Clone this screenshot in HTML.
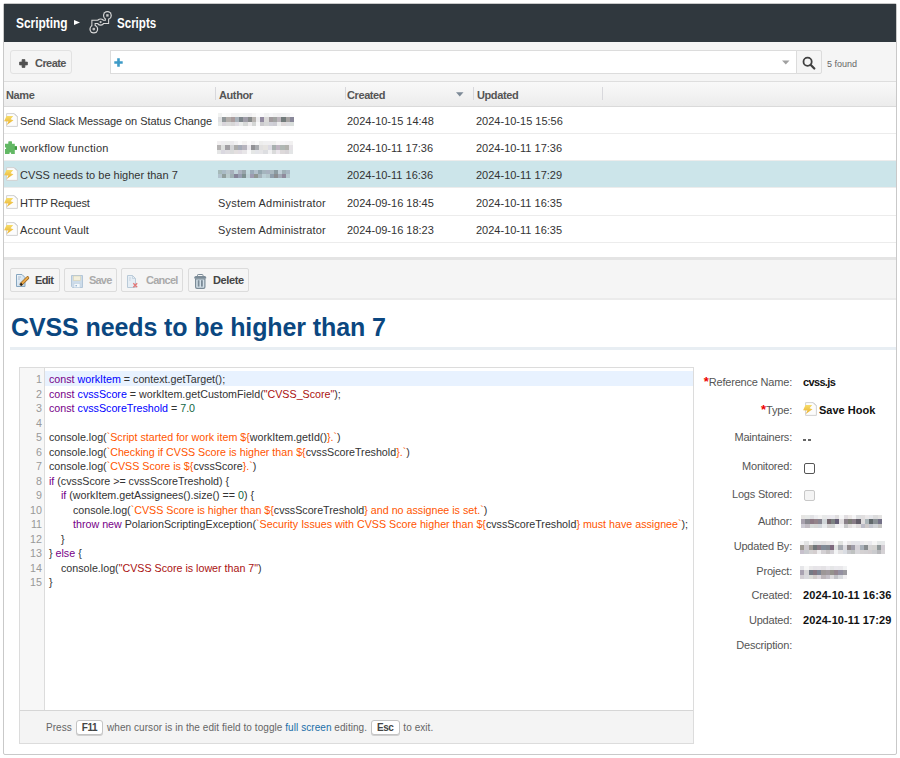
<!DOCTYPE html>
<html><head><meta charset="utf-8"><style>
*{box-sizing:border-box}
html,body{margin:0;padding:0;background:#fff;width:900px;height:758px;overflow:hidden;font-family:"Liberation Sans",sans-serif;color:#333}
.a{position:absolute;white-space:nowrap}
#frame{position:absolute;left:3px;top:3px;width:894px;height:752px;border:1px solid #c9c9c9;border-radius:2px}
#hdr{position:absolute;left:4px;top:4px;width:892px;height:38px;background:#30383e}
#tb{position:absolute;left:4px;top:42px;width:892px;height:40px;background:#f5f5f5;border-bottom:1px solid #dedede}
.btn{position:absolute;border:1px solid #dcdcdc;border-radius:2px;background:#f5f5f5;height:24px;top:0}
#thead{position:absolute;left:4px;top:82px;width:892px;height:25px;background:linear-gradient(#f9f9f9,#ececec);border-bottom:1px solid #dadada}
#thead .a{font-size:11px;font-weight:bold;color:#555;top:7px;line-height:12px;letter-spacing:-0.4px}
.row{position:absolute;left:4px;width:892px;height:27px;border-bottom:1px solid #ececec;font-size:11px;color:#333}
.row .a{top:8px;line-height:12px}
.sel{background:#cce5ea}
.sep{position:absolute;top:5px;width:1px;height:13px;background:#d8d8dc}
#tb2{position:absolute;left:4px;top:257px;width:892px;height:43px;background:#f5f5f5;border-top:3px solid #e4e4e4;border-bottom:2px solid #ebebeb}
#tb2 .btn{top:8px}
#tb2 .bt{position:absolute;top:5px;font-size:11px;font-weight:bold;line-height:12px}
h1{position:absolute;margin:0;left:11px;top:315px;font-size:25px;line-height:25px;font-weight:bold;color:#0b4780;white-space:nowrap;letter-spacing:-0.1px}
#uline{position:absolute;left:10px;top:347px;width:886px;height:3px;background:#e8eef3}
#ed{position:absolute;left:19px;top:367px;width:675px;height:377px;border:1px solid #dcdcdc}
#gut{position:absolute;left:0;top:0;width:25px;height:342px;background:#f7f7f7;border-right:1px solid #dcdcdc}
#hl{position:absolute;left:25px;top:3px;width:648px;height:15px;background:#e8f2ff}
#foot{position:absolute;left:0;top:342px;width:673px;height:33px;background:#f4f4f4;border-top:1px solid #d6d6d6;font-size:10px;color:#666}
.ln{position:absolute;left:0;width:22px;text-align:right;font-size:10.7px;color:#999;line-height:14.5px}
.cl{position:absolute;left:29px;font-size:10.7px;color:#333;white-space:pre;line-height:14.5px}
.k{color:#708}.d{color:#00f}.s{color:#a11}.s2{color:#f50}.n{color:#164}
.lab{position:absolute;right:108px;font-size:11px;letter-spacing:-0.2px;color:#555;text-align:right;white-space:nowrap;line-height:12px}
.val{position:absolute;left:803px;font-size:11px;color:#111;white-space:nowrap;line-height:12px}
.req{color:#e00;font-weight:bold;font-size:13px;line-height:10px;letter-spacing:0}
.kbd{display:inline-block;border:1px solid #c4c4c4;border-radius:3px;background:#fff;font-weight:bold;color:#444;padding:0 5px 0 5px;font-size:10px;letter-spacing:-0.4px;line-height:13px;box-shadow:0 1px 0 #d0d0d0;margin:0 1px}
</style></head><body>
<div id="frame"></div>
<div id="hdr">
  <div class="a" style="left:12px;top:12px;font-size:14px;line-height:14px;font-weight:bold;color:#fff;transform:scaleX(0.85);transform-origin:0 0">Scripting</div>
  <svg class="a" style="left:70px;top:16px" width="6" height="5" viewBox="0 0 6 5"><path d="M0 0 L6 2.5 L0 5Z" fill="#fff"/></svg>
  <svg class="a" style="left:82px;top:4px" width="28" height="28" viewBox="0 0 28 28" fill="none">
    <g stroke="#d9d9d9" fill="#d9d9d9">
      <path d="M7.5 21 V13.85 H21 V7.4" stroke-width="4.3" fill="none" stroke-linejoin="miter"/>
      <circle cx="7.8" cy="21.1" r="4.4" stroke="none"/>
      <circle cx="14.6" cy="14.1" r="3.7" stroke="none"/>
      <circle cx="21.4" cy="7.4" r="4.4" stroke="none"/>
    </g>
    <g stroke="#30383e" fill="#30383e">
      <path d="M7.5 21 V13.85 H21 V7.4" stroke-width="2.2" fill="none" stroke-linejoin="miter"/>
      <circle cx="7.8" cy="21.1" r="3.2" stroke="none"/>
      <circle cx="14.6" cy="14.1" r="2.5" stroke="none"/>
      <circle cx="21.4" cy="7.4" r="3.2" stroke="none"/>
    </g>
    <circle cx="7.8" cy="21.1" r="1.4" fill="#bdbdbd"/>
    <circle cx="14.6" cy="14.1" r="1.1" fill="#c8c8c8"/>
    <rect x="20.2" y="6.2" width="2.4" height="2.4" fill="#c8c8c8"/>
  </svg>
  <div class="a" style="left:113px;top:12px;font-size:14px;line-height:14px;font-weight:bold;color:#fff;transform:scaleX(0.825);transform-origin:0 0">Scripts</div>
</div>
<div id="tb">
  <div class="btn" style="left:6px;top:8px;width:62px;border-color:#e2e2e2;border-radius:3px">
    <svg class="a" style="left:8px;top:8px" width="9" height="9" viewBox="0 0 9 9"><path d="M3.1 0.6H5.9V3.1H8.4V5.9H5.9V8.4H3.1V5.9H0.6V3.1H3.1Z" fill="#505050" stroke="#505050" stroke-width="0.8" stroke-linejoin="round"/></svg>
    <div class="a" style="left:24px;top:6px;font-size:11px;line-height:12px;font-weight:bold;color:#505050;letter-spacing:-0.55px;color:#555">Create</div>
  </div>
  <div class="a" style="left:106px;top:8px;width:687px;height:24px;background:#fff;border:1px solid #dcdcdc">
    <svg class="a" style="left:3px;top:7px" width="9" height="9" viewBox="0 0 9 9"><path d="M3.2 0.3H5.8V3.2H8.7V5.8H5.8V8.7H3.2V5.8H0.3V3.2H3.2Z" fill="#3d9bc7"/></svg>
    <svg class="a" style="left:671px;top:9px" width="8" height="5" viewBox="0 0 8 5"><path d="M0 0.5H7.5L3.75 4.5Z" fill="#a0a0a0"/></svg>
  </div>
  <div class="btn" style="left:792px;top:8px;width:26px;border-radius:0 2px 2px 0">
    <svg class="a" style="left:5px;top:5px" width="15" height="15" viewBox="0 0 15 15"><circle cx="5.6" cy="5.8" r="4.1" fill="none" stroke="#404040" stroke-width="1.8"/><path d="M8.6 8.8 L12.3 12.5" stroke="#404040" stroke-width="2.3" stroke-linecap="round"/></svg>
  </div>
  <div class="a" style="left:823px;top:17px;font-size:9px;line-height:10px;color:#666">5 found</div>
</div>
<div id="thead">
  <div class="a" style="left:2px">Name</div>
  <div class="sep" style="left:211px"></div>
  <div class="a" style="left:215px">Author</div>
  <div class="sep" style="left:341px"></div>
  <div class="a" style="left:343px">Created</div>
  <svg class="a" style="left:452px;top:10px" width="8" height="5" viewBox="0 0 8 5"><path d="M0 0.3H7.5L3.75 4.6Z" fill="#7d8a97"/></svg>
  <div class="sep" style="left:469px"></div>
  <div class="a" style="left:473px">Updated</div>
  <div class="sep" style="left:598px"></div>
</div>
<div class="row" style="top:107px;height:27px"><div class="a" style="left:0;top:0px;width:100%;height:26px"><svg class="a" style="left:0px;top:6px" width="14" height="14" viewBox="0 0 14 14"><defs><linearGradient id="bg06" x1="0" y1="0" x2="0" y2="1"><stop offset="0" stop-color="#f6dc6a"/><stop offset="1" stop-color="#e9ad2a"/></linearGradient></defs><path d="M2.6 0.6H10.2L13.4 3.8V13.4H2.6Z" fill="#fcfcfc" stroke="#d2d2d2"/><path d="M10.2 0.6L13.4 3.8" stroke="#c8c8c8"/><path d="M2.5 3.1 L9.2 3.1 L6.6 6.3 L9.5 7.2 L2.7 12.1 L4.5 8.5 L0.1 8.2 Z" fill="url(#bg06)"/></svg><div class="a" style="left:16px;letter-spacing:-0.07px">Send Slack Message on Status Change</div><svg class="a" style="left:214px;top:6px" width="76" height="17" viewBox="0 0 76.50 17.00" shape-rendering="crispEdges"><rect x="0.00" y="0.00" width="4.30" height="4.30" fill="rgb(241,242,241)"/><rect x="4.25" y="0.00" width="4.30" height="4.30" fill="rgb(251,251,251)"/><rect x="8.50" y="0.00" width="4.30" height="4.30" fill="rgb(249,249,249)"/><rect x="12.75" y="0.00" width="4.30" height="4.30" fill="rgb(241,241,241)"/><rect x="17.00" y="0.00" width="4.30" height="4.30" fill="rgb(240,241,241)"/><rect x="21.25" y="0.00" width="4.30" height="4.30" fill="rgb(243,244,243)"/><rect x="25.50" y="0.00" width="4.30" height="4.30" fill="rgb(240,242,242)"/><rect x="29.75" y="0.00" width="4.30" height="4.30" fill="rgb(240,239,241)"/><rect x="34.00" y="0.00" width="4.30" height="4.30" fill="rgb(246,246,246)"/><rect x="38.25" y="0.00" width="4.30" height="4.30" fill="rgb(251,251,252)"/><rect x="42.50" y="0.00" width="4.30" height="4.30" fill="rgb(249,249,250)"/><rect x="46.75" y="0.00" width="4.30" height="4.30" fill="rgb(241,242,242)"/><rect x="51.00" y="0.00" width="4.30" height="4.30" fill="rgb(246,246,248)"/><rect x="55.25" y="0.00" width="4.30" height="4.30" fill="rgb(242,242,243)"/><rect x="59.50" y="0.00" width="4.30" height="4.30" fill="rgb(241,240,242)"/><rect x="63.75" y="0.00" width="4.30" height="4.30" fill="rgb(241,242,243)"/><rect x="68.00" y="0.00" width="4.30" height="4.30" fill="rgb(244,244,246)"/><rect x="72.25" y="0.00" width="4.30" height="4.30" fill="rgb(250,250,251)"/><rect x="0.00" y="4.25" width="4.30" height="4.30" fill="rgb(222,223,225)"/><rect x="4.25" y="4.25" width="4.30" height="4.30" fill="rgb(144,151,153)"/><rect x="8.50" y="4.25" width="4.30" height="4.30" fill="rgb(179,174,171)"/><rect x="12.75" y="4.25" width="4.30" height="4.30" fill="rgb(170,156,157)"/><rect x="17.00" y="4.25" width="4.30" height="4.30" fill="rgb(169,178,186)"/><rect x="21.25" y="4.25" width="4.30" height="4.30" fill="rgb(125,133,139)"/><rect x="25.50" y="4.25" width="4.30" height="4.30" fill="rgb(159,157,168)"/><rect x="29.75" y="4.25" width="4.30" height="4.30" fill="rgb(135,138,138)"/><rect x="34.00" y="4.25" width="4.30" height="4.30" fill="rgb(184,180,177)"/><rect x="38.25" y="4.25" width="4.30" height="4.30" fill="rgb(236,236,238)"/><rect x="42.50" y="4.25" width="4.30" height="4.30" fill="rgb(146,138,160)"/><rect x="46.75" y="4.25" width="4.30" height="4.30" fill="rgb(218,217,216)"/><rect x="51.00" y="4.25" width="4.30" height="4.30" fill="rgb(162,155,158)"/><rect x="55.25" y="4.25" width="4.30" height="4.30" fill="rgb(162,164,163)"/><rect x="59.50" y="4.25" width="4.30" height="4.30" fill="rgb(188,181,188)"/><rect x="63.75" y="4.25" width="4.30" height="4.30" fill="rgb(114,123,123)"/><rect x="68.00" y="4.25" width="4.30" height="4.30" fill="rgb(165,162,161)"/><rect x="72.25" y="4.25" width="4.30" height="4.30" fill="rgb(137,135,153)"/><rect x="0.00" y="8.50" width="4.30" height="4.30" fill="rgb(230,232,231)"/><rect x="4.25" y="8.50" width="4.30" height="4.30" fill="rgb(217,213,219)"/><rect x="8.50" y="8.50" width="4.30" height="4.30" fill="rgb(219,219,219)"/><rect x="12.75" y="8.50" width="4.30" height="4.30" fill="rgb(215,214,215)"/><rect x="17.00" y="8.50" width="4.30" height="4.30" fill="rgb(224,221,227)"/><rect x="21.25" y="8.50" width="4.30" height="4.30" fill="rgb(233,235,234)"/><rect x="25.50" y="8.50" width="4.30" height="4.30" fill="rgb(214,216,215)"/><rect x="29.75" y="8.50" width="4.30" height="4.30" fill="rgb(238,236,238)"/><rect x="34.00" y="8.50" width="4.30" height="4.30" fill="rgb(212,214,213)"/><rect x="38.25" y="8.50" width="4.30" height="4.30" fill="rgb(248,248,249)"/><rect x="42.50" y="8.50" width="4.30" height="4.30" fill="rgb(204,203,206)"/><rect x="46.75" y="8.50" width="4.30" height="4.30" fill="rgb(214,215,215)"/><rect x="51.00" y="8.50" width="4.30" height="4.30" fill="rgb(208,208,216)"/><rect x="55.25" y="8.50" width="4.30" height="4.30" fill="rgb(205,204,211)"/><rect x="59.50" y="8.50" width="4.30" height="4.30" fill="rgb(236,237,237)"/><rect x="63.75" y="8.50" width="4.30" height="4.30" fill="rgb(222,217,218)"/><rect x="68.00" y="8.50" width="4.30" height="4.30" fill="rgb(220,220,224)"/><rect x="72.25" y="8.50" width="4.30" height="4.30" fill="rgb(217,222,219)"/><rect x="0.00" y="12.75" width="4.30" height="4.30" fill="rgb(253,253,253)"/><rect x="4.25" y="12.75" width="4.30" height="4.30" fill="rgb(251,252,252)"/><rect x="8.50" y="12.75" width="4.30" height="4.30" fill="rgb(251,251,251)"/><rect x="12.75" y="12.75" width="4.30" height="4.30" fill="rgb(251,250,250)"/><rect x="17.00" y="12.75" width="4.30" height="4.30" fill="rgb(251,251,251)"/><rect x="21.25" y="12.75" width="4.30" height="4.30" fill="rgb(251,251,252)"/><rect x="25.50" y="12.75" width="4.30" height="4.30" fill="rgb(250,250,250)"/><rect x="29.75" y="12.75" width="4.30" height="4.30" fill="rgb(252,252,252)"/><rect x="34.00" y="12.75" width="4.30" height="4.30" fill="rgb(251,251,251)"/><rect x="38.25" y="12.75" width="4.30" height="4.30" fill="rgb(253,253,253)"/><rect x="42.50" y="12.75" width="4.30" height="4.30" fill="rgb(253,253,253)"/><rect x="46.75" y="12.75" width="4.30" height="4.30" fill="rgb(251,250,251)"/><rect x="51.00" y="12.75" width="4.30" height="4.30" fill="rgb(251,251,251)"/><rect x="55.25" y="12.75" width="4.30" height="4.30" fill="rgb(253,253,253)"/><rect x="59.50" y="12.75" width="4.30" height="4.30" fill="rgb(251,251,251)"/><rect x="63.75" y="12.75" width="4.30" height="4.30" fill="rgb(253,253,253)"/><rect x="68.00" y="12.75" width="4.30" height="4.30" fill="rgb(251,251,252)"/><rect x="72.25" y="12.75" width="4.30" height="4.30" fill="rgb(251,251,251)"/></svg><div class="a" style="left:343px">2024-10-15 14:48</div><div class="a" style="left:472px">2024-10-15 15:56</div></div></div>
<div class="row" style="top:134px;height:27px"><div class="a" style="left:0;top:0px;width:100%;height:26px"><svg class="a" style="left:1px;top:7px" width="13" height="14" viewBox="0 0 13 14"><path d="M0 2.8 H3.3 V0.8 Q3.3 0.2 3.9 0.2 H6.4 Q7 0.2 7 0.8 V2.8 H9.8 V5.3 H11.5 Q12 5.3 12 5.8 V8.2 Q12 8.7 11.5 8.7 H9.8 V12.9 H6.1 V11.4 H4.5 V12.9 H0 V8.1 H1.1 V6.5 H0 Z" fill="#62b864"/><path d="M9.8 5.3 H11.5 Q12 5.3 12 5.8 V8.2 Q12 8.7 11.5 8.7 H9.8Z" fill="#3f9a42"/></svg><div class="a" style="left:16px;letter-spacing:0.25px">workflow function</div><svg class="a" style="left:213px;top:7px" width="76" height="13" viewBox="0 0 76.50 12.75" shape-rendering="crispEdges"><rect x="0.00" y="0.00" width="4.30" height="4.30" fill="rgb(242,240,241)"/><rect x="4.25" y="0.00" width="4.30" height="4.30" fill="rgb(238,237,239)"/><rect x="8.50" y="0.00" width="4.30" height="4.30" fill="rgb(237,238,237)"/><rect x="12.75" y="0.00" width="4.30" height="4.30" fill="rgb(235,234,237)"/><rect x="17.00" y="0.00" width="4.30" height="4.30" fill="rgb(242,242,244)"/><rect x="21.25" y="0.00" width="4.30" height="4.30" fill="rgb(251,250,251)"/><rect x="25.50" y="0.00" width="4.30" height="4.30" fill="rgb(244,242,242)"/><rect x="29.75" y="0.00" width="4.30" height="4.30" fill="rgb(252,251,252)"/><rect x="34.00" y="0.00" width="4.30" height="4.30" fill="rgb(242,241,242)"/><rect x="38.25" y="0.00" width="4.30" height="4.30" fill="rgb(249,249,249)"/><rect x="42.50" y="0.00" width="4.30" height="4.30" fill="rgb(238,238,237)"/><rect x="46.75" y="0.00" width="4.30" height="4.30" fill="rgb(240,240,241)"/><rect x="51.00" y="0.00" width="4.30" height="4.30" fill="rgb(241,240,241)"/><rect x="55.25" y="0.00" width="4.30" height="4.30" fill="rgb(240,240,239)"/><rect x="59.50" y="0.00" width="4.30" height="4.30" fill="rgb(248,247,247)"/><rect x="63.75" y="0.00" width="4.30" height="4.30" fill="rgb(246,245,246)"/><rect x="68.00" y="0.00" width="4.30" height="4.30" fill="rgb(243,243,244)"/><rect x="72.25" y="0.00" width="4.30" height="4.30" fill="rgb(242,241,241)"/><rect x="0.00" y="4.25" width="4.30" height="4.30" fill="rgb(181,179,179)"/><rect x="4.25" y="4.25" width="4.30" height="4.30" fill="rgb(222,224,222)"/><rect x="8.50" y="4.25" width="4.30" height="4.30" fill="rgb(161,159,163)"/><rect x="12.75" y="4.25" width="4.30" height="4.30" fill="rgb(212,213,216)"/><rect x="17.00" y="4.25" width="4.30" height="4.30" fill="rgb(173,173,172)"/><rect x="21.25" y="4.25" width="4.30" height="4.30" fill="rgb(166,171,184)"/><rect x="25.50" y="4.25" width="4.30" height="4.30" fill="rgb(183,180,190)"/><rect x="29.75" y="4.25" width="4.30" height="4.30" fill="rgb(236,233,238)"/><rect x="34.00" y="4.25" width="4.30" height="4.30" fill="rgb(146,146,150)"/><rect x="38.25" y="4.25" width="4.30" height="4.30" fill="rgb(170,172,176)"/><rect x="42.50" y="4.25" width="4.30" height="4.30" fill="rgb(226,225,225)"/><rect x="46.75" y="4.25" width="4.30" height="4.30" fill="rgb(230,228,225)"/><rect x="51.00" y="4.25" width="4.30" height="4.30" fill="rgb(221,220,228)"/><rect x="55.25" y="4.25" width="4.30" height="4.30" fill="rgb(168,176,175)"/><rect x="59.50" y="4.25" width="4.30" height="4.30" fill="rgb(190,180,192)"/><rect x="63.75" y="4.25" width="4.30" height="4.30" fill="rgb(176,184,180)"/><rect x="68.00" y="4.25" width="4.30" height="4.30" fill="rgb(178,178,173)"/><rect x="72.25" y="4.25" width="4.30" height="4.30" fill="rgb(229,226,230)"/><rect x="0.00" y="8.50" width="4.30" height="4.30" fill="rgb(229,230,230)"/><rect x="4.25" y="8.50" width="4.30" height="4.30" fill="rgb(218,216,224)"/><rect x="8.50" y="8.50" width="4.30" height="4.30" fill="rgb(223,221,225)"/><rect x="12.75" y="8.50" width="4.30" height="4.30" fill="rgb(219,220,220)"/><rect x="17.00" y="8.50" width="4.30" height="4.30" fill="rgb(227,223,223)"/><rect x="21.25" y="8.50" width="4.30" height="4.30" fill="rgb(226,221,227)"/><rect x="25.50" y="8.50" width="4.30" height="4.30" fill="rgb(232,230,232)"/><rect x="29.75" y="8.50" width="4.30" height="4.30" fill="rgb(250,250,250)"/><rect x="34.00" y="8.50" width="4.30" height="4.30" fill="rgb(229,231,230)"/><rect x="38.25" y="8.50" width="4.30" height="4.30" fill="rgb(228,229,233)"/><rect x="42.50" y="8.50" width="4.30" height="4.30" fill="rgb(231,230,232)"/><rect x="46.75" y="8.50" width="4.30" height="4.30" fill="rgb(221,222,225)"/><rect x="51.00" y="8.50" width="4.30" height="4.30" fill="rgb(242,242,243)"/><rect x="55.25" y="8.50" width="4.30" height="4.30" fill="rgb(218,219,219)"/><rect x="59.50" y="8.50" width="4.30" height="4.30" fill="rgb(235,231,236)"/><rect x="63.75" y="8.50" width="4.30" height="4.30" fill="rgb(221,217,218)"/><rect x="68.00" y="8.50" width="4.30" height="4.30" fill="rgb(216,213,216)"/><rect x="72.25" y="8.50" width="4.30" height="4.30" fill="rgb(227,229,230)"/></svg><div class="a" style="left:343px">2024-10-11 17:36</div><div class="a" style="left:472px">2024-10-11 17:36</div></div></div>
<div class="row sel" style="top:161px;height:27px"><div class="a" style="left:0;top:0px;width:100%;height:26px"><svg class="a" style="left:0px;top:6px" width="14" height="14" viewBox="0 0 14 14"><defs><linearGradient id="bg06" x1="0" y1="0" x2="0" y2="1"><stop offset="0" stop-color="#f6dc6a"/><stop offset="1" stop-color="#e9ad2a"/></linearGradient></defs><path d="M2.6 0.6H10.2L13.4 3.8V13.4H2.6Z" fill="#fcfcfc" stroke="#d2d2d2"/><path d="M10.2 0.6L13.4 3.8" stroke="#c8c8c8"/><path d="M2.5 3.1 L9.2 3.1 L6.6 6.3 L9.5 7.2 L2.7 12.1 L4.5 8.5 L0.1 8.2 Z" fill="url(#bg06)"/></svg><div class="a" style="left:16px;letter-spacing:0px">CVSS needs to be higher than 7</div><svg class="a" style="left:212px;top:9px" width="76" height="8" viewBox="0 0 76.50 8.50" shape-rendering="crispEdges"><rect x="0.00" y="0.00" width="4.30" height="4.30" fill="rgb(166,186,186)"/><rect x="4.25" y="0.00" width="4.30" height="4.30" fill="rgb(170,187,198)"/><rect x="8.50" y="0.00" width="4.30" height="4.30" fill="rgb(182,196,203)"/><rect x="12.75" y="0.00" width="4.30" height="4.30" fill="rgb(167,177,188)"/><rect x="17.00" y="0.00" width="4.30" height="4.30" fill="rgb(192,212,218)"/><rect x="21.25" y="0.00" width="4.30" height="4.30" fill="rgb(171,178,191)"/><rect x="25.50" y="0.00" width="4.30" height="4.30" fill="rgb(152,164,170)"/><rect x="29.75" y="0.00" width="4.30" height="4.30" fill="rgb(193,216,221)"/><rect x="34.00" y="0.00" width="4.30" height="4.30" fill="rgb(154,171,185)"/><rect x="38.25" y="0.00" width="4.30" height="4.30" fill="rgb(177,192,204)"/><rect x="42.50" y="0.00" width="4.30" height="4.30" fill="rgb(144,164,173)"/><rect x="46.75" y="0.00" width="4.30" height="4.30" fill="rgb(165,181,190)"/><rect x="51.00" y="0.00" width="4.30" height="4.30" fill="rgb(168,178,192)"/><rect x="55.25" y="0.00" width="4.30" height="4.30" fill="rgb(170,185,192)"/><rect x="59.50" y="0.00" width="4.30" height="4.30" fill="rgb(140,156,162)"/><rect x="63.75" y="0.00" width="4.30" height="4.30" fill="rgb(191,207,215)"/><rect x="68.00" y="0.00" width="4.30" height="4.30" fill="rgb(158,175,182)"/><rect x="72.25" y="0.00" width="4.30" height="4.30" fill="rgb(167,183,195)"/><rect x="0.00" y="4.25" width="4.30" height="4.30" fill="rgb(178,195,206)"/><rect x="4.25" y="4.25" width="4.30" height="4.30" fill="rgb(145,158,157)"/><rect x="8.50" y="4.25" width="4.30" height="4.30" fill="rgb(185,203,205)"/><rect x="12.75" y="4.25" width="4.30" height="4.30" fill="rgb(158,175,179)"/><rect x="17.00" y="4.25" width="4.30" height="4.30" fill="rgb(133,132,152)"/><rect x="21.25" y="4.25" width="4.30" height="4.30" fill="rgb(151,159,178)"/><rect x="25.50" y="4.25" width="4.30" height="4.30" fill="rgb(128,145,145)"/><rect x="29.75" y="4.25" width="4.30" height="4.30" fill="rgb(189,209,214)"/><rect x="34.00" y="4.25" width="4.30" height="4.30" fill="rgb(157,155,177)"/><rect x="38.25" y="4.25" width="4.30" height="4.30" fill="rgb(143,150,146)"/><rect x="42.50" y="4.25" width="4.30" height="4.30" fill="rgb(165,178,186)"/><rect x="46.75" y="4.25" width="4.30" height="4.30" fill="rgb(187,207,214)"/><rect x="51.00" y="4.25" width="4.30" height="4.30" fill="rgb(180,199,204)"/><rect x="55.25" y="4.25" width="4.30" height="4.30" fill="rgb(144,159,172)"/><rect x="59.50" y="4.25" width="4.30" height="4.30" fill="rgb(139,142,145)"/><rect x="63.75" y="4.25" width="4.30" height="4.30" fill="rgb(161,170,182)"/><rect x="68.00" y="4.25" width="4.30" height="4.30" fill="rgb(143,138,156)"/><rect x="72.25" y="4.25" width="4.30" height="4.30" fill="rgb(180,200,206)"/></svg><div class="a" style="left:343px">2024-10-11 16:36</div><div class="a" style="left:472px">2024-10-11 17:29</div></div></div>
<div class="row" style="top:188px;height:28px"><div class="a" style="left:0;top:1px;width:100%;height:26px"><svg class="a" style="left:0px;top:6px" width="14" height="14" viewBox="0 0 14 14"><defs><linearGradient id="bg06" x1="0" y1="0" x2="0" y2="1"><stop offset="0" stop-color="#f6dc6a"/><stop offset="1" stop-color="#e9ad2a"/></linearGradient></defs><path d="M2.6 0.6H10.2L13.4 3.8V13.4H2.6Z" fill="#fcfcfc" stroke="#d2d2d2"/><path d="M10.2 0.6L13.4 3.8" stroke="#c8c8c8"/><path d="M2.5 3.1 L9.2 3.1 L6.6 6.3 L9.5 7.2 L2.7 12.1 L4.5 8.5 L0.1 8.2 Z" fill="url(#bg06)"/></svg><div class="a" style="left:16px;letter-spacing:-0.25px">HTTP Request</div><div class="a" style="left:214px;letter-spacing:0.2px">System Administrator</div><div class="a" style="left:343px">2024-09-16 18:45</div><div class="a" style="left:472px">2024-10-11 16:35</div></div></div>
<div class="row" style="top:216px;height:27px"><div class="a" style="left:0;top:0px;width:100%;height:26px"><svg class="a" style="left:0px;top:6px" width="14" height="14" viewBox="0 0 14 14"><defs><linearGradient id="bg06" x1="0" y1="0" x2="0" y2="1"><stop offset="0" stop-color="#f6dc6a"/><stop offset="1" stop-color="#e9ad2a"/></linearGradient></defs><path d="M2.6 0.6H10.2L13.4 3.8V13.4H2.6Z" fill="#fcfcfc" stroke="#d2d2d2"/><path d="M10.2 0.6L13.4 3.8" stroke="#c8c8c8"/><path d="M2.5 3.1 L9.2 3.1 L6.6 6.3 L9.5 7.2 L2.7 12.1 L4.5 8.5 L0.1 8.2 Z" fill="url(#bg06)"/></svg><div class="a" style="left:16px;letter-spacing:0.15px">Account Vault</div><div class="a" style="left:214px;letter-spacing:0.2px">System Administrator</div><div class="a" style="left:343px">2024-09-16 18:23</div><div class="a" style="left:472px">2024-10-11 16:35</div></div></div>
<div id="tb2">
  <div class="btn" style="left:6px;width:50px">
    <svg class="a" style="left:4px;top:3px" width="16" height="16" viewBox="0 0 16 16"><defs><linearGradient id="pg" x1="0" y1="0" x2="1" y2="1"><stop offset="0" stop-color="#f4f8fc"/><stop offset="1" stop-color="#bcd4e8"/></linearGradient></defs><path d="M1.5 2.5H7L10 5.5V14.5H1.5Z" fill="url(#pg)" stroke="#86a6c0"/><path d="M3 5H6M3 7H5" stroke="#9ab" stroke-width="0.7"/><path d="M6.2 12.2 L12.6 5.8" stroke="#8a5a1a" stroke-width="3.2" stroke-linecap="round"/><path d="M6.4 12 L12.6 5.8" stroke="#e9a84a" stroke-width="2" stroke-linecap="round"/><path d="M5.6 13 L7 11.6" stroke="#222" stroke-width="2.2"/></svg>
    <div class="bt" style="left:24px;color:#444;letter-spacing:-0.6px">Edit</div>
  </div>
  <div class="btn" style="left:60px;width:53px">
    <svg class="a" style="left:6px;top:6px" width="12" height="13" viewBox="0 0 12 13"><path d="M0.5 0.5H11.5V12.5H1.5L0.5 11.5Z" fill="#cddcea" stroke="#b3c6d8"/><rect x="2.5" y="1" width="7" height="4.5" fill="#f3efdc" stroke="#d8d2b4" stroke-width="0.6"/><rect x="3" y="8.5" width="6" height="4" fill="#f4f8fb" stroke="#c2d2e0" stroke-width="0.6"/><rect x="4.5" y="10" width="1.4" height="1.4" fill="#8fb0d0"/></svg>
    <div class="bt" style="left:24px;color:#aaa;letter-spacing:-0.8px">Save</div>
  </div>
  <div class="btn" style="left:117px;width:62px">
    <svg class="a" style="left:5px;top:6px" width="13" height="14" viewBox="0 0 13 14"><path d="M0.5 0.5H5.5L8.5 3.5V12.5H0.5Z" fill="#e6eef5" stroke="#b9cad8"/><path d="M5.5 0.5V3.5H8.5" fill="none" stroke="#b9cad8" stroke-width="0.7"/><path d="M2 3H4M2 5H3.5" stroke="#b0c0d0" stroke-width="0.6"/><path d="M6.3 8.3 L10.2 12.2 M10.2 8.3 L6.3 12.2" stroke="#e27878" stroke-width="1.3"/></svg>
    <div class="bt" style="left:24px;color:#aaa;letter-spacing:-0.75px">Cancel</div>
  </div>
  <div class="btn" style="left:184px;width:61px">
    <svg class="a" style="left:5px;top:5px" width="13" height="15" viewBox="0 0 13 15"><path d="M3.5 2.2 V1.2 Q3.5 0.5 4.2 0.5 H8.3 Q9 0.5 9 1.2 V2.2" stroke="#7b8b97" stroke-width="1" fill="none"/><path d="M0.3 3.6 Q0.3 2 1.9 2 H10.6 Q12.2 2 12.2 3.6 V4.4 H0.3Z" fill="#7b8b97"/><path d="M1.6 4.8 H10.9 V12.9 Q10.9 14.3 9.5 14.3 H3 Q1.6 14.3 1.6 12.9Z" fill="#d5e1e9" stroke="#7b8b97" stroke-width="1.2"/><rect x="3.7" y="6.2" width="1.8" height="6.4" fill="#7b8b97"/><rect x="7" y="6.2" width="1.8" height="6.4" fill="#7b8b97"/></svg>
    <div class="bt" style="left:24px;color:#444;letter-spacing:-0.4px">Delete</div>
  </div>
</div>
<h1>CVSS needs to be higher than 7</h1>
<div id="uline"></div>
<div id="ed"><div id="gut"></div><div id="hl"></div>
<div class="ln" style="top:4.0px">1</div><div class="cl" style="top:4.0px;left:29px"><span class="k">const</span> <span class="d">workItem</span> = context.getTarget();</div>
<div class="ln" style="top:18.5px">2</div><div class="cl" style="top:18.5px;left:29px"><span class="k">const</span> <span class="d">cvssScore</span> = workItem.getCustomField(<span class="s">"CVSS_Score"</span>);</div>
<div class="ln" style="top:33.0px">3</div><div class="cl" style="top:33.0px;left:29px"><span class="k">const</span> <span class="d">cvssScoreTreshold</span> = <span class="n">7.0</span></div>
<div class="ln" style="top:47.5px">4</div><div class="cl" style="top:47.5px;left:29px"></div>
<div class="ln" style="top:62.0px">5</div><div class="cl" style="top:62.0px;left:29px">console.log(<span class="s2">`Script started for work item ${</span>workItem.getId()<span class="s2">}.`</span>)</div>
<div class="ln" style="top:76.5px">6</div><div class="cl" style="top:76.5px;left:29px">console.log(<span class="s2">`Checking if CVSS Score is higher than ${</span>cvssScoreTreshold<span class="s2">}.`</span>)</div>
<div class="ln" style="top:91.0px">7</div><div class="cl" style="top:91.0px;left:29px">console.log(<span class="s2">`CVSS Score is ${</span>cvssScore<span class="s2">}.`</span>)</div>
<div class="ln" style="top:105.5px">8</div><div class="cl" style="top:105.5px;left:29px"><span class="k">if</span> (cvssScore &gt;= cvssScoreTreshold) {</div>
<div class="ln" style="top:120.0px">9</div><div class="cl" style="top:120.0px;left:41px"><span class="k">if</span> (workItem.getAssignees().size() == <span class="n">0</span>) {</div>
<div class="ln" style="top:134.5px">10</div><div class="cl" style="top:134.5px;left:53px">console.log(<span class="s2">`CVSS Score is higher than ${</span>cvssScoreTreshold<span class="s2">} and no assignee is set.`</span>)</div>
<div class="ln" style="top:149.0px">11</div><div class="cl" style="top:149.0px;left:53px"><span class="k">throw</span> <span class="k">new</span> PolarionScriptingException(<span class="s2">`Security Issues with CVSS Score higher than ${</span>cvssScoreTreshold<span class="s2">} must have assignee`</span>);</div>
<div class="ln" style="top:163.5px">12</div><div class="cl" style="top:163.5px;left:41px">}</div>
<div class="ln" style="top:178.0px">13</div><div class="cl" style="top:178.0px;left:29px">} <span class="k">else</span> {</div>
<div class="ln" style="top:192.5px">14</div><div class="cl" style="top:192.5px;left:41px">console.log(<span class="s">"CVSS Score is lower than 7"</span>)</div>
<div class="ln" style="top:207.0px">15</div><div class="cl" style="top:207.0px;left:29px">}</div>
<div id="foot"><div class="a" style="left:26px;top:9px;line-height:14px;letter-spacing:0.06px">Press <span class="kbd">F11</span> when cursor is in the edit field to toggle <span style="color:#1a6ea8">full screen</span> editing. <span class="kbd">Esc</span> to exit.</div></div></div>
<div class="lab" style="top:376px"><span class="req">*</span>Reference Name:</div>
<div class="val" style="top:376px;font-weight:bold;letter-spacing:-0.65px">cvss.js</div>
<div class="lab" style="top:404px"><span class="req">*</span>Type:</div>
<svg class="a" style="left:803px;top:402px" width="14" height="14" viewBox="0 0 14 14"><defs><linearGradient id="bg803402" x1="0" y1="0" x2="0" y2="1"><stop offset="0" stop-color="#f6dc6a"/><stop offset="1" stop-color="#e9ad2a"/></linearGradient></defs><path d="M2.6 0.6H10.2L13.4 3.8V13.4H2.6Z" fill="#fcfcfc" stroke="#d2d2d2"/><path d="M10.2 0.6L13.4 3.8" stroke="#c8c8c8"/><path d="M2.5 3.1 L9.2 3.1 L6.6 6.3 L9.5 7.2 L2.7 12.1 L4.5 8.5 L0.1 8.2 Z" fill="url(#bg803402)"/></svg>
<div class="val" style="top:404px;left:819px;font-weight:bold">Save Hook</div>
<div class="lab" style="top:431px">Maintainers:</div>
<div class="a" style="left:803px;top:439px;width:3px;height:2px;background:#666"></div><div class="a" style="left:808px;top:439px;width:3px;height:2px;background:#666"></div>
<div class="lab" style="top:460px">Monitored:</div>
<div class="a" style="left:804px;top:463px;width:11px;height:11px;border:1px solid #555;border-radius:2px;background:#fff"></div>
<div class="lab" style="top:488px">Logs Stored:</div>
<div class="a" style="left:804px;top:490px;width:11px;height:11px;border:1px solid #c8c8c8;border-radius:2px;background:#f4f4f4"></div>
<div class="lab" style="top:515px">Author:</div>
<svg class="a" style="left:801px;top:515px" width="81" height="13" viewBox="0 0 80.75 12.75" shape-rendering="crispEdges"><rect x="0.00" y="0.00" width="4.30" height="4.30" fill="rgb(230,229,227)"/><rect x="4.25" y="0.00" width="4.30" height="4.30" fill="rgb(230,232,231)"/><rect x="8.50" y="0.00" width="4.30" height="4.30" fill="rgb(226,226,229)"/><rect x="12.75" y="0.00" width="4.30" height="4.30" fill="rgb(237,237,240)"/><rect x="17.00" y="0.00" width="4.30" height="4.30" fill="rgb(244,243,243)"/><rect x="21.25" y="0.00" width="4.30" height="4.30" fill="rgb(232,233,233)"/><rect x="25.50" y="0.00" width="4.30" height="4.30" fill="rgb(235,233,237)"/><rect x="29.75" y="0.00" width="4.30" height="4.30" fill="rgb(235,234,239)"/><rect x="34.00" y="0.00" width="4.30" height="4.30" fill="rgb(224,222,223)"/><rect x="38.25" y="0.00" width="4.30" height="4.30" fill="rgb(246,246,247)"/><rect x="42.50" y="0.00" width="4.30" height="4.30" fill="rgb(224,221,224)"/><rect x="46.75" y="0.00" width="4.30" height="4.30" fill="rgb(236,232,232)"/><rect x="51.00" y="0.00" width="4.30" height="4.30" fill="rgb(245,245,246)"/><rect x="55.25" y="0.00" width="4.30" height="4.30" fill="rgb(221,222,224)"/><rect x="59.50" y="0.00" width="4.30" height="4.30" fill="rgb(224,222,223)"/><rect x="63.75" y="0.00" width="4.30" height="4.30" fill="rgb(234,232,233)"/><rect x="68.00" y="0.00" width="4.30" height="4.30" fill="rgb(229,230,234)"/><rect x="72.25" y="0.00" width="4.30" height="4.30" fill="rgb(220,220,221)"/><rect x="76.50" y="0.00" width="4.30" height="4.30" fill="rgb(228,227,226)"/><rect x="0.00" y="4.25" width="4.30" height="4.30" fill="rgb(168,162,174)"/><rect x="4.25" y="4.25" width="4.30" height="4.30" fill="rgb(137,137,144)"/><rect x="8.50" y="4.25" width="4.30" height="4.30" fill="rgb(140,120,131)"/><rect x="12.75" y="4.25" width="4.30" height="4.30" fill="rgb(147,131,137)"/><rect x="17.00" y="4.25" width="4.30" height="4.30" fill="rgb(135,133,145)"/><rect x="21.25" y="4.25" width="4.30" height="4.30" fill="rgb(209,214,217)"/><rect x="25.50" y="4.25" width="4.30" height="4.30" fill="rgb(116,104,111)"/><rect x="29.75" y="4.25" width="4.30" height="4.30" fill="rgb(125,130,130)"/><rect x="34.00" y="4.25" width="4.30" height="4.30" fill="rgb(101,94,118)"/><rect x="38.25" y="4.25" width="4.30" height="4.30" fill="rgb(225,222,224)"/><rect x="42.50" y="4.25" width="4.30" height="4.30" fill="rgb(138,129,137)"/><rect x="46.75" y="4.25" width="4.30" height="4.30" fill="rgb(125,127,119)"/><rect x="51.00" y="4.25" width="4.30" height="4.30" fill="rgb(137,126,136)"/><rect x="55.25" y="4.25" width="4.30" height="4.30" fill="rgb(99,94,105)"/><rect x="59.50" y="4.25" width="4.30" height="4.30" fill="rgb(221,219,220)"/><rect x="63.75" y="4.25" width="4.30" height="4.30" fill="rgb(171,181,185)"/><rect x="68.00" y="4.25" width="4.30" height="4.30" fill="rgb(96,104,107)"/><rect x="72.25" y="4.25" width="4.30" height="4.30" fill="rgb(137,144,149)"/><rect x="76.50" y="4.25" width="4.30" height="4.30" fill="rgb(115,112,135)"/><rect x="0.00" y="8.50" width="4.30" height="4.30" fill="rgb(205,203,212)"/><rect x="4.25" y="8.50" width="4.30" height="4.30" fill="rgb(194,189,196)"/><rect x="8.50" y="8.50" width="4.30" height="4.30" fill="rgb(214,219,217)"/><rect x="12.75" y="8.50" width="4.30" height="4.30" fill="rgb(214,214,213)"/><rect x="17.00" y="8.50" width="4.30" height="4.30" fill="rgb(209,214,218)"/><rect x="21.25" y="8.50" width="4.30" height="4.30" fill="rgb(232,234,236)"/><rect x="25.50" y="8.50" width="4.30" height="4.30" fill="rgb(211,210,210)"/><rect x="29.75" y="8.50" width="4.30" height="4.30" fill="rgb(209,211,212)"/><rect x="34.00" y="8.50" width="4.30" height="4.30" fill="rgb(241,241,242)"/><rect x="38.25" y="8.50" width="4.30" height="4.30" fill="rgb(244,243,245)"/><rect x="42.50" y="8.50" width="4.30" height="4.30" fill="rgb(201,202,203)"/><rect x="46.75" y="8.50" width="4.30" height="4.30" fill="rgb(226,222,223)"/><rect x="51.00" y="8.50" width="4.30" height="4.30" fill="rgb(236,235,234)"/><rect x="55.25" y="8.50" width="4.30" height="4.30" fill="rgb(222,219,219)"/><rect x="59.50" y="8.50" width="4.30" height="4.30" fill="rgb(188,188,199)"/><rect x="63.75" y="8.50" width="4.30" height="4.30" fill="rgb(205,201,201)"/><rect x="68.00" y="8.50" width="4.30" height="4.30" fill="rgb(195,197,206)"/><rect x="72.25" y="8.50" width="4.30" height="4.30" fill="rgb(209,211,215)"/><rect x="76.50" y="8.50" width="4.30" height="4.30" fill="rgb(197,197,195)"/></svg>
<div class="lab" style="top:540px">Updated By:</div>
<svg class="a" style="left:800px;top:541px" width="85" height="13" viewBox="0 0 85.00 12.75" shape-rendering="crispEdges"><rect x="0.00" y="0.00" width="4.30" height="4.30" fill="rgb(245,245,246)"/><rect x="4.25" y="0.00" width="4.30" height="4.30" fill="rgb(226,227,227)"/><rect x="8.50" y="0.00" width="4.30" height="4.30" fill="rgb(246,245,245)"/><rect x="12.75" y="0.00" width="4.30" height="4.30" fill="rgb(226,228,229)"/><rect x="17.00" y="0.00" width="4.30" height="4.30" fill="rgb(228,229,230)"/><rect x="21.25" y="0.00" width="4.30" height="4.30" fill="rgb(226,225,225)"/><rect x="25.50" y="0.00" width="4.30" height="4.30" fill="rgb(232,230,230)"/><rect x="29.75" y="0.00" width="4.30" height="4.30" fill="rgb(235,232,236)"/><rect x="34.00" y="0.00" width="4.30" height="4.30" fill="rgb(251,251,251)"/><rect x="38.25" y="0.00" width="4.30" height="4.30" fill="rgb(226,227,224)"/><rect x="42.50" y="0.00" width="4.30" height="4.30" fill="rgb(248,247,248)"/><rect x="46.75" y="0.00" width="4.30" height="4.30" fill="rgb(234,232,233)"/><rect x="51.00" y="0.00" width="4.30" height="4.30" fill="rgb(229,228,233)"/><rect x="55.25" y="0.00" width="4.30" height="4.30" fill="rgb(229,229,234)"/><rect x="59.50" y="0.00" width="4.30" height="4.30" fill="rgb(235,234,238)"/><rect x="63.75" y="0.00" width="4.30" height="4.30" fill="rgb(238,239,239)"/><rect x="68.00" y="0.00" width="4.30" height="4.30" fill="rgb(235,235,239)"/><rect x="72.25" y="0.00" width="4.30" height="4.30" fill="rgb(246,246,246)"/><rect x="76.50" y="0.00" width="4.30" height="4.30" fill="rgb(230,233,233)"/><rect x="80.75" y="0.00" width="4.30" height="4.30" fill="rgb(231,233,234)"/><rect x="0.00" y="4.25" width="4.30" height="4.30" fill="rgb(158,154,147)"/><rect x="4.25" y="4.25" width="4.30" height="4.30" fill="rgb(205,201,205)"/><rect x="8.50" y="4.25" width="4.30" height="4.30" fill="rgb(162,157,151)"/><rect x="12.75" y="4.25" width="4.30" height="4.30" fill="rgb(113,119,122)"/><rect x="17.00" y="4.25" width="4.30" height="4.30" fill="rgb(139,123,133)"/><rect x="21.25" y="4.25" width="4.30" height="4.30" fill="rgb(129,139,151)"/><rect x="25.50" y="4.25" width="4.30" height="4.30" fill="rgb(130,136,144)"/><rect x="29.75" y="4.25" width="4.30" height="4.30" fill="rgb(125,104,125)"/><rect x="34.00" y="4.25" width="4.30" height="4.30" fill="rgb(223,225,224)"/><rect x="38.25" y="4.25" width="4.30" height="4.30" fill="rgb(167,170,177)"/><rect x="42.50" y="4.25" width="4.30" height="4.30" fill="rgb(220,219,223)"/><rect x="46.75" y="4.25" width="4.30" height="4.30" fill="rgb(144,137,139)"/><rect x="51.00" y="4.25" width="4.30" height="4.30" fill="rgb(158,155,168)"/><rect x="55.25" y="4.25" width="4.30" height="4.30" fill="rgb(215,211,217)"/><rect x="59.50" y="4.25" width="4.30" height="4.30" fill="rgb(169,177,186)"/><rect x="63.75" y="4.25" width="4.30" height="4.30" fill="rgb(135,140,143)"/><rect x="68.00" y="4.25" width="4.30" height="4.30" fill="rgb(213,212,213)"/><rect x="72.25" y="4.25" width="4.30" height="4.30" fill="rgb(211,210,208)"/><rect x="76.50" y="4.25" width="4.30" height="4.30" fill="rgb(143,152,153)"/><rect x="80.75" y="4.25" width="4.30" height="4.30" fill="rgb(210,204,211)"/><rect x="0.00" y="8.50" width="4.30" height="4.30" fill="rgb(199,192,204)"/><rect x="4.25" y="8.50" width="4.30" height="4.30" fill="rgb(201,203,207)"/><rect x="8.50" y="8.50" width="4.30" height="4.30" fill="rgb(213,211,211)"/><rect x="12.75" y="8.50" width="4.30" height="4.30" fill="rgb(212,206,207)"/><rect x="17.00" y="8.50" width="4.30" height="4.30" fill="rgb(237,236,237)"/><rect x="21.25" y="8.50" width="4.30" height="4.30" fill="rgb(211,208,211)"/><rect x="25.50" y="8.50" width="4.30" height="4.30" fill="rgb(198,195,196)"/><rect x="29.75" y="8.50" width="4.30" height="4.30" fill="rgb(212,209,214)"/><rect x="34.00" y="8.50" width="4.30" height="4.30" fill="rgb(243,244,245)"/><rect x="38.25" y="8.50" width="4.30" height="4.30" fill="rgb(227,226,227)"/><rect x="42.50" y="8.50" width="4.30" height="4.30" fill="rgb(218,221,227)"/><rect x="46.75" y="8.50" width="4.30" height="4.30" fill="rgb(199,200,203)"/><rect x="51.00" y="8.50" width="4.30" height="4.30" fill="rgb(191,194,193)"/><rect x="55.25" y="8.50" width="4.30" height="4.30" fill="rgb(216,215,219)"/><rect x="59.50" y="8.50" width="4.30" height="4.30" fill="rgb(212,209,210)"/><rect x="63.75" y="8.50" width="4.30" height="4.30" fill="rgb(210,208,210)"/><rect x="68.00" y="8.50" width="4.30" height="4.30" fill="rgb(210,205,207)"/><rect x="72.25" y="8.50" width="4.30" height="4.30" fill="rgb(202,203,206)"/><rect x="76.50" y="8.50" width="4.30" height="4.30" fill="rgb(184,184,187)"/><rect x="80.75" y="8.50" width="4.30" height="4.30" fill="rgb(213,210,213)"/></svg>
<div class="lab" style="top:565px">Project:</div>
<svg class="a" style="left:800px;top:566px" width="47" height="13" viewBox="0 0 46.75 12.75" shape-rendering="crispEdges"><rect x="0.00" y="0.00" width="4.30" height="4.30" fill="rgb(230,230,233)"/><rect x="4.25" y="0.00" width="4.30" height="4.30" fill="rgb(247,247,247)"/><rect x="8.50" y="0.00" width="4.30" height="4.30" fill="rgb(234,233,234)"/><rect x="12.75" y="0.00" width="4.30" height="4.30" fill="rgb(230,228,232)"/><rect x="17.00" y="0.00" width="4.30" height="4.30" fill="rgb(232,229,233)"/><rect x="21.25" y="0.00" width="4.30" height="4.30" fill="rgb(228,226,229)"/><rect x="25.50" y="0.00" width="4.30" height="4.30" fill="rgb(236,234,238)"/><rect x="29.75" y="0.00" width="4.30" height="4.30" fill="rgb(229,230,231)"/><rect x="34.00" y="0.00" width="4.30" height="4.30" fill="rgb(234,233,237)"/><rect x="38.25" y="0.00" width="4.30" height="4.30" fill="rgb(233,232,235)"/><rect x="42.50" y="0.00" width="4.30" height="4.30" fill="rgb(241,242,243)"/><rect x="0.00" y="4.25" width="4.30" height="4.30" fill="rgb(169,162,177)"/><rect x="4.25" y="4.25" width="4.30" height="4.30" fill="rgb(214,213,215)"/><rect x="8.50" y="4.25" width="4.30" height="4.30" fill="rgb(116,122,133)"/><rect x="12.75" y="4.25" width="4.30" height="4.30" fill="rgb(132,117,128)"/><rect x="17.00" y="4.25" width="4.30" height="4.30" fill="rgb(124,132,147)"/><rect x="21.25" y="4.25" width="4.30" height="4.30" fill="rgb(157,151,151)"/><rect x="25.50" y="4.25" width="4.30" height="4.30" fill="rgb(160,153,158)"/><rect x="29.75" y="4.25" width="4.30" height="4.30" fill="rgb(148,146,140)"/><rect x="34.00" y="4.25" width="4.30" height="4.30" fill="rgb(147,133,142)"/><rect x="38.25" y="4.25" width="4.30" height="4.30" fill="rgb(147,144,161)"/><rect x="42.50" y="4.25" width="4.30" height="4.30" fill="rgb(156,155,160)"/><rect x="0.00" y="8.50" width="4.30" height="4.30" fill="rgb(211,207,212)"/><rect x="4.25" y="8.50" width="4.30" height="4.30" fill="rgb(218,218,222)"/><rect x="8.50" y="8.50" width="4.30" height="4.30" fill="rgb(219,220,216)"/><rect x="12.75" y="8.50" width="4.30" height="4.30" fill="rgb(209,204,202)"/><rect x="17.00" y="8.50" width="4.30" height="4.30" fill="rgb(221,216,221)"/><rect x="21.25" y="8.50" width="4.30" height="4.30" fill="rgb(189,182,186)"/><rect x="25.50" y="8.50" width="4.30" height="4.30" fill="rgb(197,192,200)"/><rect x="29.75" y="8.50" width="4.30" height="4.30" fill="rgb(221,219,221)"/><rect x="34.00" y="8.50" width="4.30" height="4.30" fill="rgb(194,195,199)"/><rect x="38.25" y="8.50" width="4.30" height="4.30" fill="rgb(216,218,221)"/><rect x="42.50" y="8.50" width="4.30" height="4.30" fill="rgb(241,240,242)"/></svg>
<div class="lab" style="top:589px">Created:</div>
<div class="val" style="top:589px;font-weight:bold;letter-spacing:0.1px">2024-10-11 16:36</div>
<div class="lab" style="top:614px">Updated:</div>
<div class="val" style="top:614px;font-weight:bold;letter-spacing:0.1px">2024-10-11 17:29</div>
<div class="lab" style="top:639px">Description:</div>
</body></html>
